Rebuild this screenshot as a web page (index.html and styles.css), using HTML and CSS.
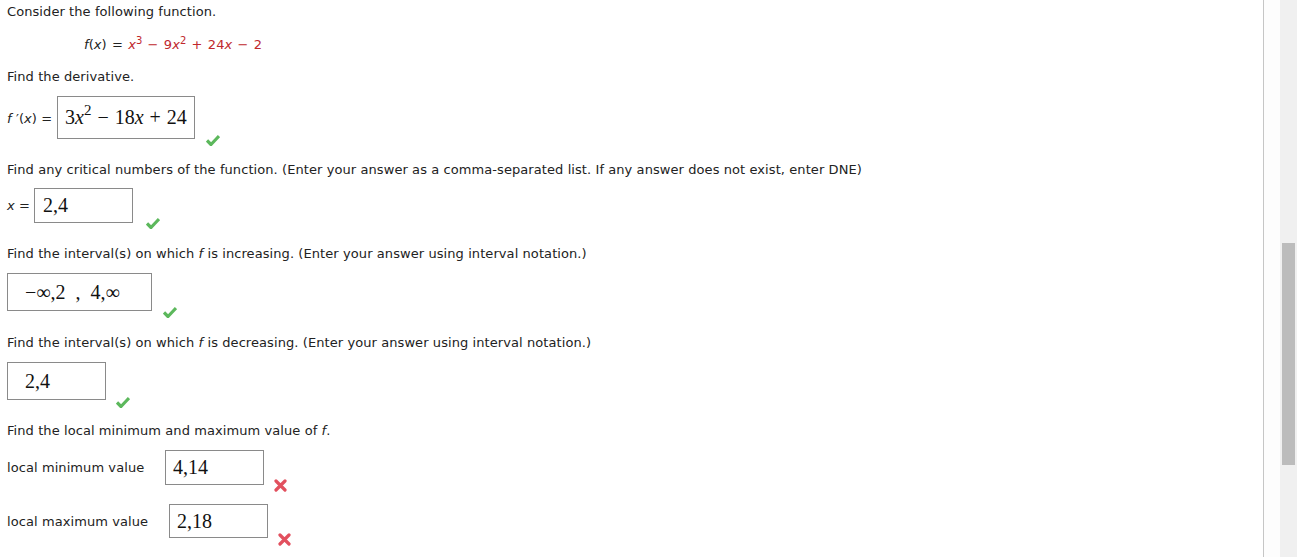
FILE: index.html
```html
<!DOCTYPE html>
<html>
<head>
<meta charset="utf-8">
<link rel="stylesheet" href="styles.css">
</head>
<body>
<div class="page">
  <main class="content">
    <p class="line intro">Consider the following function.</p>
    <div class="line func"><i>f</i>(<i>x</i>) = <span class="red"><i>x</i><sup>3</sup> &minus; 9<i>x</i><sup>2</sup> + 24<i>x</i> &minus; 2</span></div>
    <p class="line q-deriv">Find the derivative.</p>
    <div class="row row1">
      <span class="label lab1"><i>f</i> &prime;(<i>x</i>) =</span>
      <div class="box box1"><span class="math">3<i>x</i><sup>2</sup><span class="op">&minus;</span>18<i>x</i><span class="op">+</span>24</span></div>
      <span class="icon check ck1"><svg viewBox="0 0 14 12" width="14" height="12"><path d="M1 6.5 L5 10.5 L13 2" fill="none" stroke="#5cb85c" stroke-width="3.2" stroke-linejoin="round"/></svg></span>
    </div>
    <p class="line q-crit">Find any critical numbers of the function. (Enter your answer as a comma-separated list. If any answer does not exist, enter DNE)</p>
    <div class="row row2">
      <span class="label lab2"><i>x</i> =</span>
      <div class="box box2"><span class="math">2,4</span></div>
      <span class="icon check ck2"><svg viewBox="0 0 14 12" width="14" height="12"><path d="M1 6.5 L5 10.5 L13 2" fill="none" stroke="#5cb85c" stroke-width="3.2" stroke-linejoin="round"/></svg></span>
    </div>
    <p class="line q-inc">Find the interval(s) on which <i>f</i> is increasing. (Enter your answer using interval notation.)</p>
    <div class="row row3">
      <div class="box box3"><span class="math">&minus;&infin;,2 <span class="sep">,</span> 4,&infin;</span></div>
      <span class="icon check ck3"><svg viewBox="0 0 14 12" width="14" height="12"><path d="M1 6.5 L5 10.5 L13 2" fill="none" stroke="#5cb85c" stroke-width="3.2" stroke-linejoin="round"/></svg></span>
    </div>
    <p class="line q-dec">Find the interval(s) on which <i>f</i> is decreasing. (Enter your answer using interval notation.)</p>
    <div class="row row4">
      <div class="box box4"><span class="math">2,4</span></div>
      <span class="icon check ck4"><svg viewBox="0 0 14 12" width="14" height="12"><path d="M1 6.5 L5 10.5 L13 2" fill="none" stroke="#5cb85c" stroke-width="3.2" stroke-linejoin="round"/></svg></span>
    </div>
    <p class="line q-loc">Find the local minimum and maximum value of <i>f</i>.</p>
    <div class="row row5">
      <span class="label lab5">local minimum value</span>
      <div class="box box5"><span class="math">4,14</span></div>
      <span class="icon cross x5"><svg viewBox="0 0 13 13" width="13" height="13"><path d="M2 2 L11 11 M11 2 L2 11" stroke="#e2505e" stroke-width="3.2" stroke-linecap="round"/></svg></span>
    </div>
    <div class="row row6">
      <span class="label lab6">local maximum value</span>
      <div class="box box6"><span class="math">2,18</span></div>
      <span class="icon cross x6"><svg viewBox="0 0 13 13" width="13" height="13"><path d="M2 2 L11 11 M11 2 L2 11" stroke="#e2505e" stroke-width="3.2" stroke-linecap="round"/></svg></span>
    </div>
  </main>
  <div class="divider"></div>
  <div class="gutter"></div>
  <div class="scrollbar"><div class="thumb"></div></div>
</div>
</body>
</html>
```
FILE: styles.css
```css
html, body {
  margin: 0;
  padding: 0;
  background: #fff;
}
body {
  font-family: "DejaVu Sans", Verdana, sans-serif;
  font-size: 13px;
  letter-spacing: 0.08px;
  color: #222;
  overflow: hidden;
}
.page {
  display: flex;
  width: 1297px;
  height: 557px;
  overflow: hidden;
}
.content {
  flex: 1;
  padding: 4px 0 0 7px;
  min-width: 0;
}
.divider {
  width: 1px;
  background: #c6c6c6;
}
.gutter {
  width: 16px;
  background: #fdfdfd;
}
.scrollbar {
  width: 17px;
  background: #f0f0f0;
  padding-top: 243px;
  box-sizing: border-box;
}
.thumb {
  margin: 0 2px;
  height: 222px;
  background: #bcbcbc;
}
.line {
  margin: 0;
  height: 16px;
  line-height: 16px;
  white-space: nowrap;
}
.func {
  margin-top: 17px;
  padding-left: 77px;
  word-spacing: 1px;
}
.func sup {
  font-size: 10px;
  vertical-align: 5px;
  line-height: 0;
}
.red { color: #c0282d; }
.q-deriv { margin-top: 16px; }
.q-crit { margin-top: 16px; }
.q-inc { margin-top: 17px; }
.q-dec { margin-top: 17px; }
.q-loc { margin-top: 15px; }

.row {
  display: flex;
  align-items: flex-start;
}
.row1 { margin-top: 11px; }
.row2 { margin-top: 10px; }
.row3 { margin-top: 11px; }
.row4 { margin-top: 11px; }
.row5 { margin-top: 11px; }
.row6 { margin-top: 12px; }

.label {
  height: 16px;
  line-height: 16px;
  white-space: nowrap;
}
.lab1 { width: 50px; margin-top: 15px; }
.lab2 { width: 27px; margin-top: 10px; }
.lab5 { width: 158px; margin-top: 10px; }
.lab6 { width: 162px; margin-top: 10px; }

.box {
  box-sizing: border-box;
  border: 1px solid #8a8a8a;
  background: #fff;
  display: flex;
  align-items: center;
  font-family: "Liberation Serif", "Times New Roman", serif;
  font-size: 20px;
  letter-spacing: 0;
  color: #111;
  white-space: nowrap;
}
.box1 { width: 138px; height: 43px; padding-left: 7px; }
.box2 { width: 99px; height: 35px; padding-left: 8px; }
.box3 { width: 145px; height: 38px; padding-left: 17px; }
.box4 { width: 99px; height: 38px; padding-left: 17px; }
.box5 { width: 99px; height: 35px; padding-left: 7px; }
.box6 { width: 99px; height: 34px; padding-left: 7px; }

.math sup {
  font-size: 15px;
  vertical-align: 9px;
  line-height: 0;
}
.math .op { margin: 0 6px; }
.math .sep { margin: 0 5px; }

.icon { display: block; line-height: 0; }
.ck1 { margin: 38px 0 0 11px; }
.ck2 { margin: 29px 0 0 13px; }
.ck3 { margin: 33px 0 0 11px; }
.ck4 { margin: 34px 0 0 10px; }
.x5 { margin: 29px 0 0 10px; }
.x6 { margin: 29px 0 0 10px; }
```
